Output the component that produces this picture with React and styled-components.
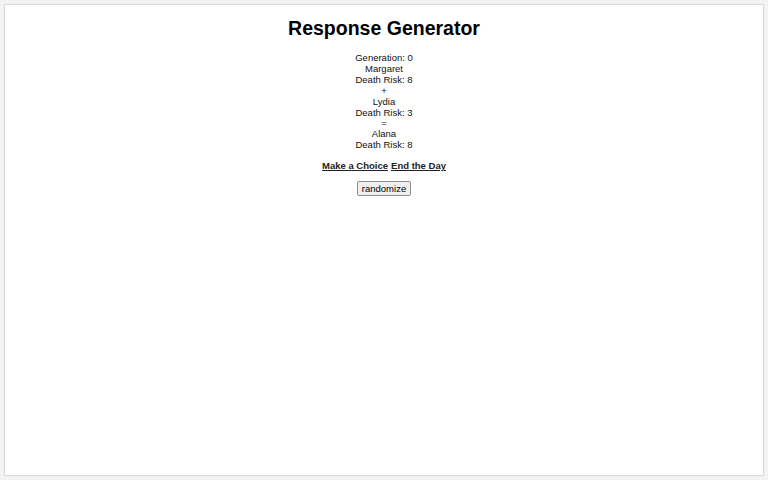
import React from "react";
import styled, { createGlobalStyle } from "styled-components";

const Global = createGlobalStyle`
  html, body {
    margin: 0;
    padding: 0;
    background: #f4f4f4;
  }
  body {
    font-family: "Liberation Sans", Arial, sans-serif;
  }
`;

const Page = styled.div`
  padding: 4px;
  height: 480px;
  box-sizing: border-box;
`;

const Panel = styled.div`
  height: 100%;
  box-sizing: border-box;
  background: #fff;
  border: 1px solid #dcdcdc;
  box-shadow: 0 0 2px rgba(0, 0, 0, 0.08);
  display: flex;
  flex-direction: column;
  align-items: center;
  padding-top: 12px;
`;

const Title = styled.h1`
  margin: 0 0 13px;
  font-size: 19.5px;
  font-weight: bold;
  color: #000;
`;

const Stats = styled.div`
  display: flex;
  flex-direction: column;
  align-items: center;
  font-size: 9.5px;
  line-height: 10.9px;
  color: #111;
`;

const Links = styled.div`
  margin-top: 9px;
  display: flex;
  gap: 3px;
  font-size: 9.5px;
  font-weight: bold;
`;

const Link = styled.a`
  color: #222;
  text-decoration: underline;
  cursor: pointer;
`;

const Button = styled.button`
  margin-top: 10px;
  font-family: "Liberation Sans", Arial, sans-serif;
  font-size: 9.5px;
  padding: 1px 4px;
  height: 15px;
  line-height: 11px;
  color: #000;
  background: #efefef;
  border: 1px solid #8f8f8f;
  border-radius: 2px;
`;

const lines = [
  "Generation: 0",
  "Margaret",
  "Death Risk: 8",
  "+",
  "Lydia",
  "Death Risk: 3",
  "=",
  "Alana",
  "Death Risk: 8",
];

export default function App() {
  return (
    <>
      <Global />
      <Page>
        <Panel>
          <Title>Response Generator</Title>
          <Stats>
            {lines.map((l, i) => (
              <span key={i}>{l}</span>
            ))}
          </Stats>
          <Links>
            <Link>Make a Choice</Link>
            <Link>End the Day</Link>
          </Links>
          <Button type="button">randomize</Button>
        </Panel>
      </Page>
    </>
  );
}
